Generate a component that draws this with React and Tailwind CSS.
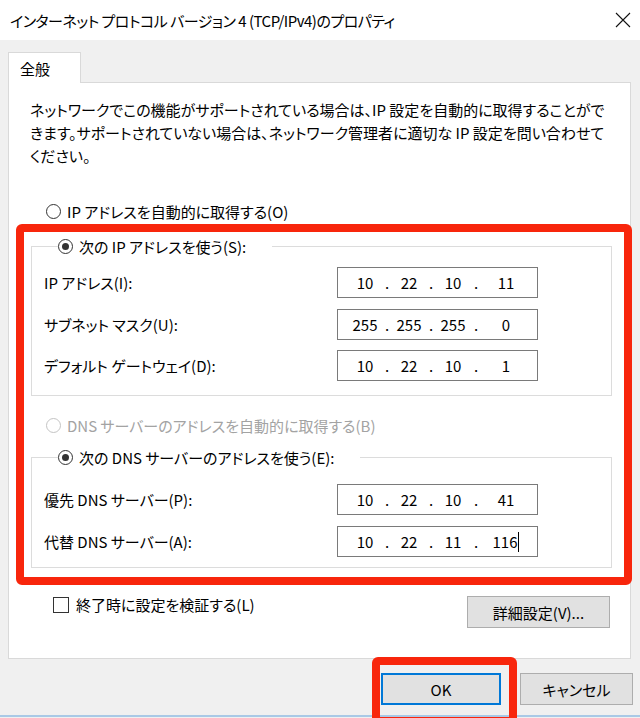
import { Fragment } from 'react';

const Radio = ({ checked, disabled }) => (
  <span className={`w-[15px] h-[15px] rounded-full border flex items-center justify-center shrink-0 bg-white ${disabled ? 'border-[#c4c4c4]' : 'border-[#333]'}`}>
    {checked && <span className="w-[7px] h-[7px] rounded-full bg-[#333]" />}
  </span>
);

const RadioRow = ({ checked, disabled, children }) => (
  <div className={`h-[20px] flex items-center gap-[6px] ${disabled ? 'text-[#a3a3a3]' : 'text-black'}`}>
    <Radio checked={checked} disabled={disabled} />
    <span className="whitespace-nowrap">{children}</span>
  </div>
);

// octet fields are not equally wide in the reference, the last one is roomier
const fieldW = ['w-[34px]', 'w-[34px]', 'w-[34px]', 'w-[48px]'];
const dotW = ['w-[10px]', 'w-[10px]', 'w-[12px]'];

const IpBox = ({ parts, caret }) => (
  <div className="w-[201px] h-[31px] border border-[#7a7a7a] bg-white flex items-center pl-[10px] text-[15px] leading-none">
    {parts.map((p, i) => (
      <Fragment key={i}>
        {i > 0 && <span className={`${dotW[i - 1]} flex justify-center`}>.</span>}
        <span className={`${fieldW[i]} flex justify-center items-center`}>
          <span className="whitespace-nowrap">{p}</span>
          {caret && i === 3 && <span className="w-px h-[20px] bg-black ml-[1px]" />}
        </span>
      </Fragment>
    ))}
  </div>
);

const FieldRow = ({ label, parts, caret }) => (
  <div className="flex items-center">
    <span className="w-[293px] whitespace-nowrap">{label}</span>
    <IpBox parts={parts} caret={caret} />
  </div>
);

const Button = ({ children, primary, className = '' }) => (
  <button className={`h-[32px] bg-[#e1e1e1] flex items-center justify-center text-black ${primary ? 'border-2 border-[#0078d7]' : 'border border-[#adadad]'} ${className}`}>
    {children}
  </button>
);

export default function App() {
  return (
    <div className="w-[640px] h-[718px] bg-[#f0f0f0] relative overflow-hidden text-[15px] leading-[23px] text-black font-['Noto_Sans_CJK_JP',sans-serif] [font-feature-settings:'palt']">
      {/* title bar */}
      <div className="h-[40px] bg-white flex items-center justify-between pl-[10px] pr-[9px]">
        <span className="text-[15px] tracking-[-0.5px] whitespace-nowrap">インターネット プロトコル バージョン 4 (TCP/IPv4)のプロパティ</span>
        <svg width="16" height="16" viewBox="0 0 16 16" className="text-[#111]">
          <path d="M1 1 L15 15 M15 1 L1 15" stroke="currentColor" strokeWidth="1.1" />
        </svg>
      </div>

      <div className="pt-[12px] pl-[8px] pr-[9px]">
        <div className="relative z-10 -mb-px w-[73px] h-[31px] bg-white border border-b-0 border-[#d9d9d9] flex items-center pl-[11px]">
          全般
        </div>
        <div className="h-[577px] bg-white border border-[#d9d9d9]">
          <p className="pt-[15px] pl-[21px] whitespace-nowrap">
            ネットワークでこの機能がサポートされている場合は、IP 設定を自動的に取得することがで
            <br />
            きます。サポートされていない場合は、ネットワーク管理者に適切な IP 設定を問い合わせて
            <br />
            ください。
          </p>

          <div className="mt-[34px] ml-[37px]">
            <RadioRow>IP アドレスを自動的に取得する(O)</RadioRow>
          </div>

          <fieldset className="mt-[15px] ml-[22px] mr-[19px] border border-[#dcdcdc] pl-[12px] pr-[73px] pt-[11px] pb-[14px]">
            <legend className="ml-[14px] pr-[26px]">
              <RadioRow checked>次の IP アドレスを使う(S):</RadioRow>
            </legend>
            <div className="flex flex-col gap-[10.5px]">
              <FieldRow label="IP アドレス(I):" parts={['10', '22', '10', '11']} />
              <FieldRow label="サブネット マスク(U):" parts={['255', '255', '255', '0']} />
              <FieldRow label="デフォルト ゲートウェイ(D):" parts={['10', '22', '10', '1']} />
            </div>
          </fieldset>

          <div className="mt-[19px] ml-[37px]">
            <RadioRow disabled>DNS サーバーのアドレスを自動的に取得する(B)</RadioRow>
          </div>

          <fieldset className="mt-[12px] ml-[22px] mr-[19px] border border-[#dcdcdc] pl-[12px] pr-[73px] pt-[17px] pb-[10px]">
            <legend className="ml-[14px] pr-[26px]">
              <RadioRow checked>次の DNS サーバーのアドレスを使う(E):</RadioRow>
            </legend>
            <div className="flex flex-col gap-[11px]">
              <FieldRow label="優先 DNS サーバー(P):" parts={['10', '22', '10', '41']} />
              <FieldRow label="代替 DNS サーバー(A):" parts={['10', '22', '11', '116']} caret />
            </div>
          </fieldset>

          <div className="mt-[28px] ml-[44px] mr-[20px] flex justify-between items-start">
            <div className="h-[17px] flex items-center gap-[7px]">
              <span className="w-[16px] h-[16px] border border-[#333] bg-white shrink-0" />
              <span className="whitespace-nowrap">終了時に設定を検証する(L)</span>
            </div>
            <Button className="w-[143px]">詳細設定(V)...</Button>
          </div>
        </div>
      </div>

      <div className="mt-[14px] pr-[7px] flex justify-end gap-[19px]">
        <Button primary className="w-[120px]">OK</Button>
        <Button className="w-[113px]">キャンセル</Button>
      </div>
      <div className="mt-[10px] h-[2px] bg-[#a9c9e6]" />

      {/* red highlight annotations */}
      <div className="absolute left-[16px] top-[224px] w-[616px] h-[361px] border-[8px] border-[#f8260c] rounded-[6px] pointer-events-none" />
      <div className="absolute left-[372px] top-[657px] w-[145px] h-[68px] border-[8px] border-[#f8260c] rounded-[6px] pointer-events-none" />
    </div>
  );
}
